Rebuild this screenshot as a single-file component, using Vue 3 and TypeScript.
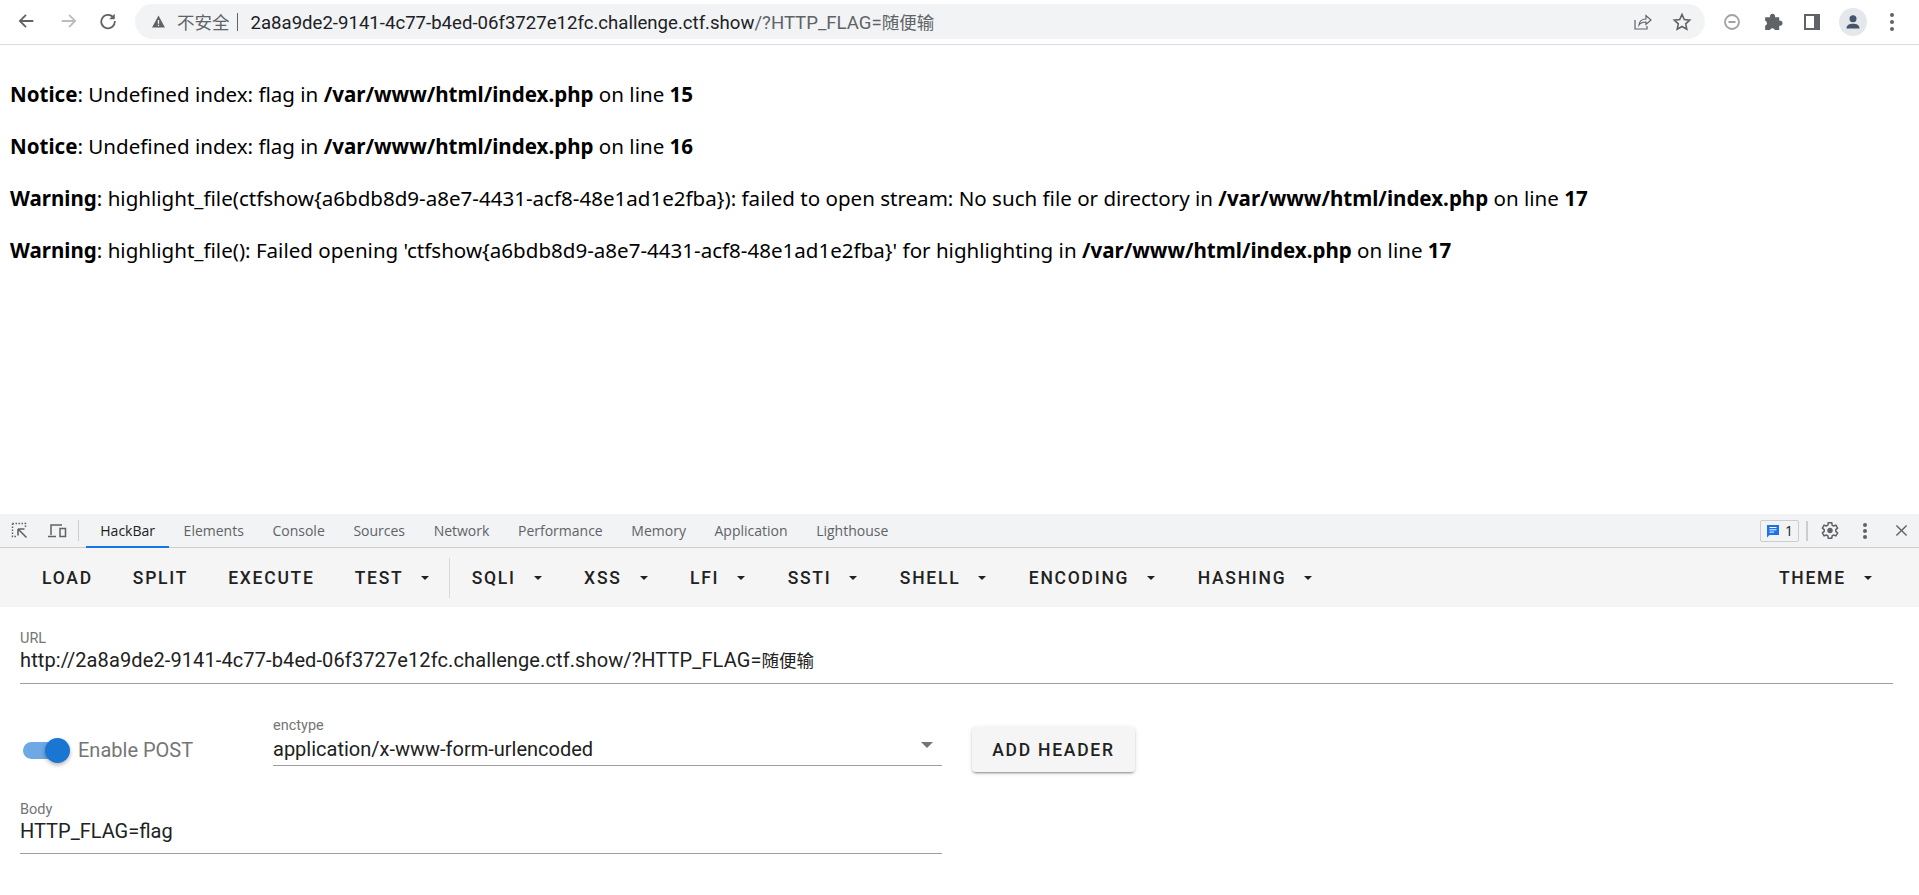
<script setup lang="ts">
const tabs = ['HackBar', 'Elements', 'Console', 'Sources', 'Network', 'Performance', 'Memory', 'Application', 'Lighthouse']
const tools = ['SQLI', 'XSS', 'LFI', 'SSTI', 'SHELL', 'ENCODING', 'HASHING']
const messages = [
  { kind: 'Notice', text: ': Undefined index: flag in ', file: '/var/www/html/index.php', line: '15' },
  { kind: 'Notice', text: ': Undefined index: flag in ', file: '/var/www/html/index.php', line: '16' },
  { kind: 'Warning', text: ': highlight_file(ctfshow{a6bdb8d9-a8e7-4431-acf8-48e1ad1e2fba}): failed to open stream: No such file or directory in ', file: '/var/www/html/index.php', line: '17' },
  { kind: 'Warning', text: ": highlight_file(): Failed opening 'ctfshow{a6bdb8d9-a8e7-4431-acf8-48e1ad1e2fba}' for highlighting in ", file: '/var/www/html/index.php', line: '17' },
]
</script>

<template>
  <div class="root">
    <header class="chrome">
      <div class="nav">
        <svg class="nav-ic" viewBox="0 0 16 16"><path d="M14.500 8H3M8 2.500 2.500 8 8 13.500" fill="none" stroke="#5f6368" stroke-width="1.600"/></svg>
        <svg class="nav-ic fwd" viewBox="0 0 16 16"><path d="M1.500 8H13M8 2.500 13.500 8 8 13.500" fill="none" stroke="#babcbe" stroke-width="1.600"/></svg>
        <svg class="nav-ic rel" viewBox="0 0 16 16"><path d="M13 5.200A6 6 0 1 0 14 8" fill="none" stroke="#5f6368" stroke-width="1.600"/><path d="M14 1.500v5H9z" fill="#5f6368"/></svg>
      </div>
      <div class="omni">
        <svg class="warn" viewBox="0 0 14 14"><path d="M7 1.500 13 12.500H1z" fill="#5f6368"/><path d="M6.400 5.500h1.200v3.600H6.400zM6.400 10h1.200v1.200H6.400z" fill="#f1f3f4"/></svg>
        <span class="insecure">不安全</span>
        <span class="pipe"></span>
        <span class="addr">2a8a9de2-9141-4c77-b4ed-06f3727e12fc.challenge.ctf.show<span class="addr-q">/?HTTP_FLAG=<span class="cjk">随便输</span></span></span>
        <span class="grow"></span>
        <svg class="omni-ic" viewBox="0 0 20 20"><path d="M3 8v9h12v-3M7 13c.5-4 3.500-6 7-6V3.500L19 8l-5 4.500V10c-3 0-5.500 1-7 3z" fill="none" stroke="#5f6368" stroke-width="1.200"/></svg>
        <svg class="omni-ic" viewBox="0 0 20 20"><path d="m10 2.500 2.300 5 5.400.6-4 3.700 1.100 5.400L10 14.500l-4.800 2.700 1.100-5.400-4-3.700 5.400-.6z" fill="none" stroke="#5f6368" stroke-width="1.600"/></svg>
      </div>
      <div class="ext">
        <svg class="ext-stop" viewBox="0 0 18 18"><circle cx="9" cy="9" r="7" fill="none" stroke="#a0a2a5" stroke-width="1.800"/><path d="M5.500 9h7" stroke="#a0a2a5" stroke-width="2"/></svg>
        <svg class="ext-puzzle" viewBox="0 1.500 18.500 18"><path d="M2 6h4.500a2.400 2.400 0 1 1 4.600 0H15v3.300a2.400 2.400 0 1 1 0 4.600V18h-4a2.400 2.400 0 0 0-4.600 0H2v-4a2.400 2.400 0 0 0 0-4.600z" fill="#5f6368"/></svg>
        <svg class="ext-side" viewBox="0 0 18 18"><path d="M1 1h16v16H1z" fill="#5f6368"/><path d="M3 3h8v12H3z" fill="#fff"/></svg>
        <div class="avatar"><svg viewBox="0 0 18 18"><circle cx="9" cy="5.800" r="3.500" fill="#44546a"/><path d="M2.500 15.500c0-3.500 3-4.800 6.500-4.800s6.500 1.300 6.500 4.800z" fill="#44546a"/></svg></div>
        <div class="dots chrome-dots"><i></i><i></i><i></i></div>
      </div>
    </header>

    <main class="page">
      <p v-for="(m, i) in messages" :key="i"><b>{{ m.kind }}</b>{{ m.text }}<b>{{ m.file }}</b> on line <b>{{ m.line }}</b></p>
    </main>

    <section class="devtools">
      <div class="dt-tabs">
        <svg class="dt-ic" viewBox="0 0 18 18"><path d="M1.500 1.500h13v4M1.500 1.500v13h4" fill="none" stroke="#5f6368" stroke-width="1.500" stroke-dasharray="1.500 1.500"/><path d="M7 7h6.500M7 7v6.500M7 7l8.500 8.500" fill="none" stroke="#5f6368" stroke-width="1.600"/></svg>
        <svg class="dt-ic dt-ic2" viewBox="0 0 20 18"><path d="M4 13V3h11M1 14.500h8M13 6.500h5.500v8H13z" fill="none" stroke="#5f6368" stroke-width="1.500"/></svg>
        <span class="dt-sep"></span>
        <span v-for="(t, i) in tabs" :key="t" class="dt-tab" :class="{ active: i === 0 }">{{ t }}</span>
        <span class="grow"></span>
        <span class="issue">
          <svg viewBox="0 0 14 14"><path d="M1 1h12v10H3.500L1 13.500z" fill="#1a73e8"/><path d="M3.500 3.500h7M3.500 5.800h7M3.500 8.100h4.500" stroke="#fff" stroke-width="1"/></svg>
          1
        </span>
        <span class="dt-sep2"></span>
        <svg class="gear" viewBox="0 0 20 20"><path d="M8.300 1.800h3.400l.5 2.400 1.400.8 2.300-.8 1.700 2.900-1.800 1.600v1.600l1.800 1.600-1.700 2.900-2.300-.8-1.400.8-.5 2.400H8.300l-.5-2.400-1.400-.8-2.300.8-1.700-2.900 1.800-1.600V8.700L2.400 7.100l1.700-2.900 2.300.8 1.400-.8z" fill="none" stroke="#5f6368" stroke-width="1.500"/><circle cx="10" cy="9.500" r="2.700" fill="#5f6368"/></svg>
        <div class="dots dt-dots"><i></i><i></i><i></i></div>
        <svg class="dt-close" viewBox="0 0 14 14"><path d="M1.500 1.500 12.500 12.500M12.500 1.500 1.500 12.500" stroke="#5f6368" stroke-width="1.500"/></svg>
      </div>

      <div class="bar">
        <span class="btn">LOAD</span>
        <span class="btn">SPLIT</span>
        <span class="btn">EXECUTE</span>
        <span class="btn">TEST<i class="caret"></i></span>
        <span class="bar-sep"></span>
        <span v-for="t in tools" :key="t" class="btn tool">{{ t }}<i class="caret"></i></span>
        <span class="grow"></span>
        <span class="btn tool">THEME<i class="caret"></i></span>
      </div>

      <div class="form">
        <div class="field url">
          <label>URL</label>
          <div class="value">http://2a8a9de2-9141-4c77-b4ed-06f3727e12fc.challenge.ctf.show/?HTTP_FLAG=<span class="cjk">随便输</span></div>
        </div>
        <div class="row">
          <div class="switch">
            <span class="track"></span>
            <span class="thumb"></span>
          </div>
          <span class="sw-label">Enable POST</span>
          <div class="field select">
            <label>enctype</label>
            <div class="value">application/x-www-form-urlencoded<i class="sel-caret"></i></div>
          </div>
          <button class="add">ADD HEADER</button>
        </div>
        <div class="field body">
          <label>Body</label>
          <div class="value">HTTP_FLAG=flag</div>
        </div>
      </div>
    </section>
  </div>
</template>

<style>
html, body { margin: 0; background: #fff; overflow: hidden; }
</style>

<style scoped>
.root { width: 1919px; height: 895px; display: flex; flex-direction: column; background: #fff; overflow: hidden; font-family: Roboto, "Noto Sans CJK SC", sans-serif; }
.grow { flex: 1; }
.cjk { font-family: "Noto Sans CJK SC", sans-serif; font-size: 17.5px; letter-spacing: 0; }
.chrome { height: 45px; box-sizing: border-box; border-bottom: 1px solid #dadce0; display: flex; align-items: flex-start; flex: none; }
.nav { display: flex; padding: 12px 0 0 17px; width: 135px; box-sizing: border-box; }
.nav-ic { width: 18px; height: 18px; }
.fwd { margin-left: 25px; }
.rel { margin-left: 21px; }
.omni { width: 1570px; height: 35px; margin-top: 4px; border-radius: 18px; background: #f1f3f4; display: flex; align-items: center; padding: 0 13px 0 16px; box-sizing: border-box; flex: none; }
.warn { width: 15px; height: 15px; flex: none; }
.insecure { margin-left: 11px; font-size: 17.5px; color: #5f6368; font-family: "Noto Sans CJK SC", sans-serif; }
.pipe { width: 1px; height: 18px; background: #5f6368; margin: 0 13px 0 7px; }
.addr { font-family: Roboto, "Noto Sans CJK SC", sans-serif; font-size: 18.6px; color: #202124; white-space: nowrap; }
.addr-q { color: #5f6368; }
.omni-ic { width: 20px; height: 20px; margin-left: 20px; flex: none; }
.ext { display: flex; align-items: center; height: 44px; }
.ext-stop { width: 18px; height: 18px; margin-left: 18px; }
.ext-puzzle { width: 20px; height: 20px; margin-left: 22px; }
.ext-side { width: 18px; height: 18px; margin-left: 20px; }
.avatar { width: 28px; height: 28px; border-radius: 50%; background: #e4e7ec; margin-left: 18px; display: flex; align-items: center; justify-content: center; }
.avatar svg { width: 18px; height: 18px; }
.dots { display: flex; flex-direction: column; gap: 2px; }
.chrome-dots { margin-left: 23px; gap: 3px; }
.dots i { width: 4px; height: 4px; border-radius: 50%; background: #5f6368; display: block; }

.page { flex: 1; padding: 23px 10px 0; font-family: "Noto Sans", "Noto Sans CJK SC", sans-serif; font-size: 20.55px; color: #000; }
.page p { margin: 0; height: 52px; line-height: 52px; white-space: nowrap; }

.devtools { flex: none; height: 381px; display: flex; flex-direction: column; }
.dt-tabs { height: 33px; flex: none; background: #f1f3f4; border-bottom: 1px solid #cbcdd1; display: flex; align-items: center; padding-left: 11px; font-size: 14px; color: #5f6368; font-family: "Open Sans", sans-serif; }
.dt-ic { width: 18px; height: 18px; flex: none; }
.dt-ic2 { width: 20px; margin-left: 18px; }
.dt-sep { width: 1px; height: 21px; background: #cbcdd1; margin: 0 7px 0 11px; }
.dt-tab { height: 33px; line-height: 33px; padding: 0 14.3px; position: relative; white-space: nowrap; }
.dt-tab.active { color: #202124; }
.dt-tab.active::after { content: ""; position: absolute; left: 0; right: 0; bottom: -1px; height: 2px; background: #1a73e8; }
.issue { width: 39px; height: 22px; box-sizing: border-box; border: 1px solid #cbcdd1; border-radius: 2px; display: flex; align-items: center; justify-content: center; gap: 5px; color: #202124; font-size: 14px; }
.issue svg { width: 14px; height: 14px; }
.dt-sep2 { width: 2px; height: 20px; background: #cbcdd1; margin: 0 12px 0 7px; }
.gear { width: 20px; height: 20px; }
.dt-dots { margin-left: 23px; }
.dt-close { width: 13px; height: 13px; margin: 0 11px 0 28px; }

.bar { height: 59px; flex: none; background: #f5f5f5; display: flex; align-items: center; padding: 1px 26px 0 22px; box-sizing: border-box; }
.btn { padding: 0 20px; font-size: 17.5px; font-weight: 500; letter-spacing: 1.75px; color: #212121; white-space: nowrap; display: inline-flex; align-items: center; }
.tool { padding: 0 21.2px; }
.caret { width: 0; height: 0; border-left: 4px solid transparent; border-right: 4px solid transparent; border-top: 4px solid #212121; margin-left: 18px; }
.bar-sep { width: 1px; height: 40px; background: #d8d8d8; flex: none; }

.form { padding: 22px 26px 0 20px; }
.field label { display: block; font-size: 14.5px; color: #757575; line-height: 20px; margin-bottom: -4px; }
.field .value { font-size: 20px; color: #212121; line-height: 30px; height: 39px; box-sizing: border-box; border-bottom: 1px solid #9e9e9e; white-space: nowrap; position: relative; }
.url .value { letter-spacing: .11px; }
.row { display: flex; align-items: flex-start; margin-top: 32px; height: 50px; }
.switch { position: relative; width: 55px; height: 24px; margin: 22px 0 0 3px; flex: none; }
.track { position: absolute; left: 0; top: 4px; width: 34px; height: 17px; border-radius: 9px; background: #6ea8e5; }
.thumb { position: absolute; left: 22px; top: 0; width: 25px; height: 25px; border-radius: 50%; background: #1976d2; box-shadow: 0 2px 4px rgba(0,0,0,.3); }
.sw-label { font-size: 20px; line-height: 24px; margin-top: 22px; color: #757575; width: 195px; flex: none; white-space: nowrap; }
.select { width: 669px; flex: none; }
.select .value { height: 34px; line-height: 34px; }
.sel-caret { position: absolute; right: 9px; top: 10px; width: 0; height: 0; border-left: 6.5px solid transparent; border-right: 6.5px solid transparent; border-top: 6.5px solid #757575; }
.add { margin: 11px 0 0 30px; width: 163px; height: 45px; flex: none; border: 0; border-radius: 4px; background: #f5f5f5; font-family: Roboto, sans-serif; font-size: 17.5px; font-weight: 500; letter-spacing: 1.75px; color: #212121; box-shadow: 0 3px 1px -2px rgba(0,0,0,.2), 0 2px 2px rgba(0,0,0,.14), 0 1px 5px rgba(0,0,0,.12); padding: 0; }
.body { margin-top: 34px; width: 922px; }
.body .value { height: 38px; }
</style>
